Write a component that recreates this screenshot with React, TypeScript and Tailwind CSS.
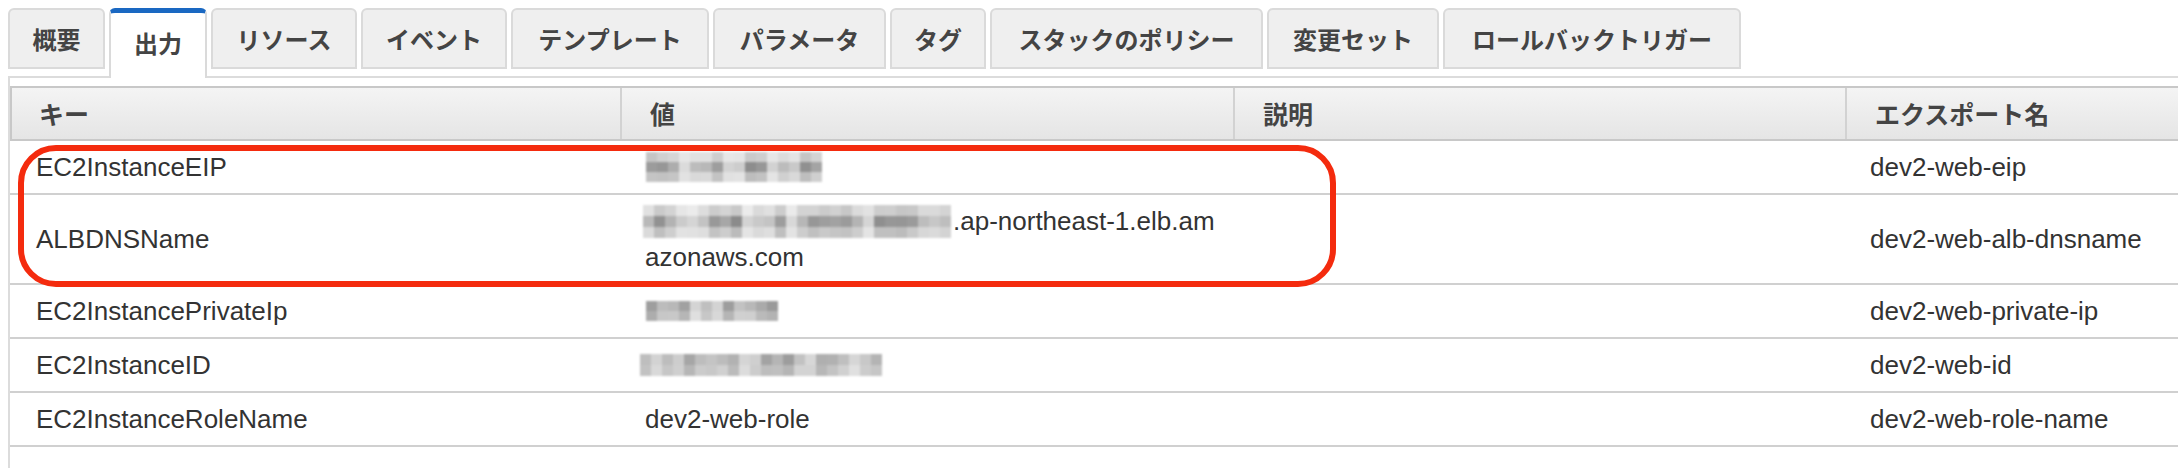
import React from "react";

const rand = (seed: number) => {
  let s = seed;
  return () => {
    s = (s * 9301 + 49297) % 233280;
    return s / 233280;
  };
};

function Mosaic({
  cols,
  rows,
  cell,
  seed,
  gaps = [],
}: {
  cols: number;
  rows: number;
  cell: string;
  seed: number;
  gaps?: number[];
}) {
  const r = rand(seed);
  const columns: string[][] = [];
  for (let c = 0; c < cols; c++) {
    const ink = gaps.includes(c) ? 0.25 : 0.3 + r() * 0.7;
    const cells: string[] = [];
    for (let k = 0; k < rows; k++) {
      const w = rows === 3 ? [0.4, 1, 0.5][k] : [0.9, 0.7][k];
      const v = Math.round(245 - ink * w * 95 - r() * 14);
      cells.push(`rgb(${v},${v},${v})`);
    }
    columns.push(cells);
  }
  return (
    <span className="inline-flex align-middle blur-[1px]">
      {columns.map((cells, i) => (
        <span key={i} className="flex flex-col">
          {cells.map((bg, j) => (
            <span key={j} className={cell} style={{ backgroundColor: bg }} />
          ))}
        </span>
      ))}
    </span>
  );
}

const tabs = [
  { label: "概要", w: "w-[97px]" },
  { label: "出力", w: "w-[98px]", active: true },
  { label: "リソース", w: "w-[146px]" },
  { label: "イベント", w: "w-[146px]" },
  { label: "テンプレート", w: "w-[198px]" },
  { label: "パラメータ", w: "w-[173px]" },
  { label: "タグ", w: "w-[96px]" },
  { label: "スタックのポリシー", w: "w-[273px]" },
  { label: "変更セット", w: "w-[172px]" },
  { label: "ロールバックトリガー", w: "w-[298px]" },
];

const font = "font-['Liberation_Sans','Noto_Sans_CJK_JP',sans-serif]";

export default function App() {
  return (
    <div
      className={`relative w-[2178px] h-[468px] overflow-hidden bg-white ${font}`}
    >
      {/* Tabs */}
      <div className="flex items-start gap-[4px] pl-[8px] pt-[8px] h-[76px]">
        {tabs.map((t) =>
          t.active ? (
            <div
              key={t.label}
              className={`${t.w} relative z-10 h-[70px] flex items-center justify-center pb-[6px] bg-white border-x-2 border-x-[#dadada] border-t-[5px] border-t-[#1a68c2] rounded-t-[6px] text-[24px] font-bold text-[#444] font-['Noto_Sans_CJK_JP',sans-serif]`}
            >
              {t.label}
            </div>
          ) : (
            <div
              key={t.label}
              className={`${t.w} h-[61px] flex items-center justify-center bg-[#efefef] border-2 border-[#dadada] rounded-t-[6px] text-[24px] font-bold text-[#444] font-['Noto_Sans_CJK_JP',sans-serif]`}
            >
              {t.label}
            </div>
          )
        )}
      </div>

      {/* Panel */}
      <div className="ml-[8px] border-t-2 border-l-2 border-[#dcdcdc] pt-[8px] h-[392px]">
        {/* Header */}
        <div className="grid grid-cols-[610px_613px_612px_1fr] h-[55px] border-y-2 border-[#c8c8c8] bg-linear-to-b from-[#f4f4f4] to-[#e5e5e5] text-[25px] font-bold text-[#444] font-['Noto_Sans_CJK_JP',sans-serif]">
          <div className="flex items-center pl-[27px] border-l-2 border-[#c8c8c8]">
            キー
          </div>
          <div className="flex items-center pl-[28px] border-l-2 border-[#d2d2d2]">
            値
          </div>
          <div className="flex items-center pl-[28px] border-l-2 border-[#d2d2d2]">
            説明
          </div>
          <div className="flex items-center pl-[28px] border-l-2 border-[#d2d2d2]">
            エクスポート名
          </div>
        </div>

        {/* Rows */}
        <div className="text-[26px] leading-[36px] text-[#333]">
          <div className="grid grid-cols-[610px_613px_612px_1fr] h-[54px] border-b-2 border-[#d0d0d0]">
            <div className="flex items-center pl-[26px]">EC2InstanceEIP</div>
            <div className="flex items-center pl-[26px]">
              <Mosaic cols={16} rows={3} cell="w-[11px] h-[10px]" seed={17} gaps={[3, 7, 11]} />
            </div>
            <div />
            <div className="flex items-center pl-[25px]">dev2-web-eip</div>
          </div>

          <div className="grid grid-cols-[610px_613px_612px_1fr] h-[90px] border-b-2 border-[#d0d0d0]">
            <div className="flex items-center pl-[26px]">ALBDNSName</div>
            <div className="flex items-center pl-[23px]">
              <div>
                <div className="flex items-center">
                  <Mosaic
                    cols={28}
                    rows={3}
                    cell="w-[11px] h-[11px]"
                    seed={53}
                    gaps={[4, 9, 13]}
                  />
                  <span className="ml-[2px]">.ap-northeast-1.elb.am</span>
                </div>
                <div className="pl-[2px]">azonaws.com</div>
              </div>
            </div>
            <div />
            <div className="flex items-center pl-[25px]">dev2-web-alb-dnsname</div>
          </div>

          <div className="grid grid-cols-[610px_613px_612px_1fr] h-[54px] border-b-2 border-[#d0d0d0]">
            <div className="flex items-center pl-[26px]">EC2InstancePrivateIp</div>
            <div className="flex items-center pl-[26px]">
              <Mosaic cols={12} rows={2} cell="w-[11px] h-[10px]" seed={91} gaps={[4]} />
            </div>
            <div />
            <div className="flex items-center pl-[25px]">dev2-web-private-ip</div>
          </div>

          <div className="grid grid-cols-[610px_613px_612px_1fr] h-[54px] border-b-2 border-[#d0d0d0]">
            <div className="flex items-center pl-[26px]">EC2InstanceID</div>
            <div className="flex items-center pl-[20px]">
              <Mosaic cols={22} rows={2} cell="w-[11px] h-[11px]" seed={131} gaps={[1, 9]} />
            </div>
            <div />
            <div className="flex items-center pl-[25px]">dev2-web-id</div>
          </div>

          <div className="grid grid-cols-[610px_613px_612px_1fr] h-[54px] border-b-2 border-[#d0d0d0]">
            <div className="flex items-center pl-[26px]">EC2InstanceRoleName</div>
            <div className="flex items-center pl-[25px]">dev2-web-role</div>
            <div />
            <div className="flex items-center pl-[25px]">dev2-web-role-name</div>
          </div>
        </div>
      </div>

      {/* Red annotation */}
      <div className="absolute left-[18px] top-[145px] w-[1318px] h-[142px] border-[6px] border-[#f42b0e] rounded-[38px] pointer-events-none" />
    </div>
  );
}
